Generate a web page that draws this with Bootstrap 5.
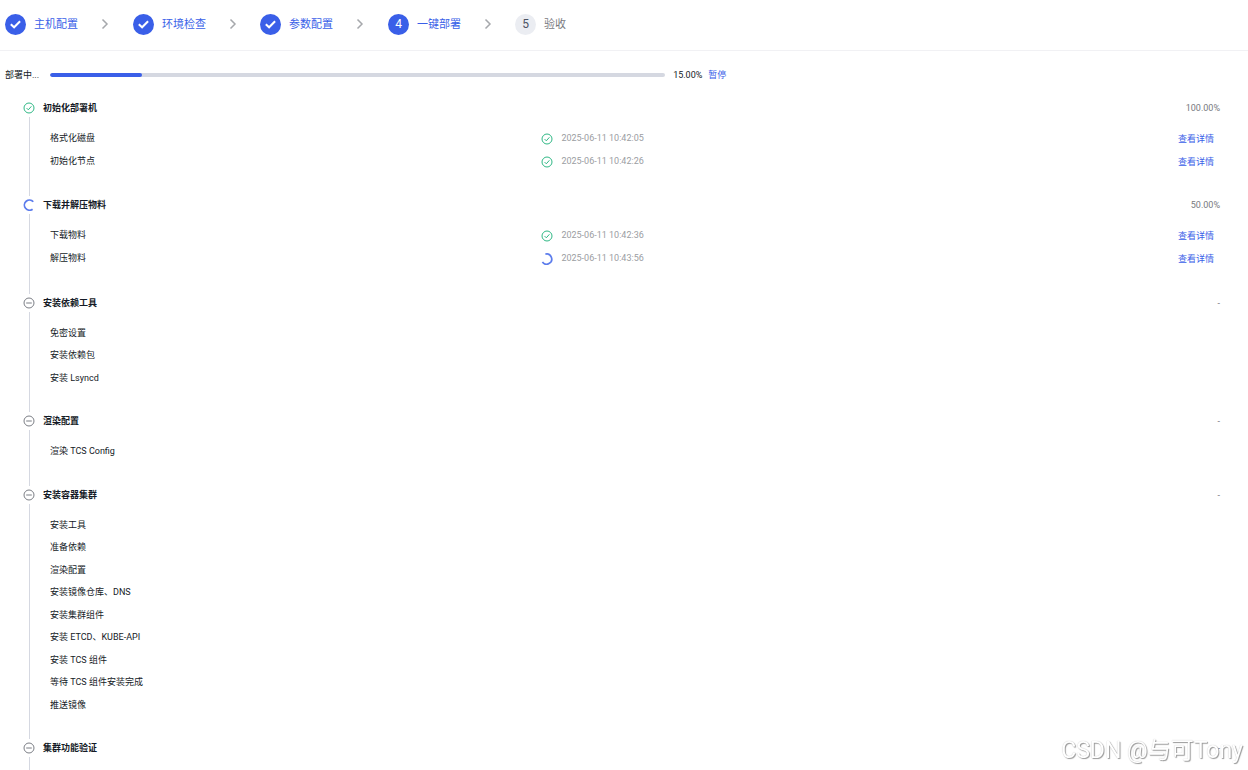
<!DOCTYPE html>
<html lang="zh-CN">
<head>
<meta charset="utf-8">
<meta name="viewport" content="width=device-width, initial-scale=1">
<title>一键部署</title>
<link href="https://cdn.jsdelivr.net/npm/bootstrap@5.3.0/dist/css/bootstrap.min.css" rel="stylesheet">
<style>
  :root { --brand: #3a5fe8; --ink: #141a26; --muted: #77797e; --faint: #9b9da2; --rail: #d5d8e1; }
  body { font: 9px/18px Roboto, "Noto Sans CJK SC", sans-serif; color: var(--ink); background: #fff; }
  a { color: var(--brand); text-decoration: none; }

  .steps { height: 51px; padding: 0 5px 2px; border-bottom: 1px solid #f1f1f4; font-size: 11px; }
  .step:not(:last-child) { margin-right: 24px; }
  .step:nth-child(even) { margin-right: 23px; }
  .step-dot { width: 21px; height: 21px; margin-right: 8px; background: var(--brand); color: #fff; font-size: 12px; line-height: 21px; }
  .step-dot.todo { background: #ebedf2; color: #4b5263; }
  .step-label { padding-top: 2px; }
  .step-label.todo { color: var(--muted); }
  .chevron { margin-left: 23px; }

  .overall { width: 57.8%; margin: 15px 5px 0; }
  .overall-label { width: 45px; }
  .overall .progress { height: 4px; margin-right: 8px; background: var(--rail); border-radius: 2px; }
  .overall .progress-bar { background: var(--brand); border-radius: 2px; }
  .btn-text { padding: 0; border: 0; background: none; color: var(--brand); margin-left: 6px; }

  .stages { margin: 15px 28px 0 23px; }
  .rail { width: 12px; margin-right: 8px; }
  .rail-icon { height: 18px; }
  .rail-line { width: 1px; background: var(--rail); }
  .stage-body { padding-bottom: 23px; }
  .stage:nth-child(even) .stage-body { padding-bottom: 24px; }
  .stage:last-child .stage-body { padding-bottom: 13px; }
  .stage-title { font-size: 9px; line-height: 18px; font-weight: 700; }
  .stage-pct { color: var(--muted); }
  .tasks { display: grid; grid-auto-rows: 22px 23px; margin: 10px 0 0 7px; line-height: 22px; }
  .tasks.detailed { grid-auto-rows: 23px; }
  .task { display: grid; grid-template-columns: 42% 1fr auto; }
  .task-time { color: var(--faint); }
  .task-time svg { margin: 6px 8px 0 0; }
  .task a { margin-right: 6px; padding-top: 1px; }
  .watermark { right: 5px; bottom: 3px; font-size: 23px; line-height: 32px; color: #fff; text-shadow: 1px 1px 1px #999, 0 0 1px #bbb; pointer-events: none; }
</style>
</head>
<body>
<svg class="d-none" aria-hidden="true">
  <symbol id="done" viewBox="0 0 12 12"><g fill="none" stroke="#2fb885"><circle cx="6" cy="6" r="5"/><path d="M3.6 6.1l1.7 1.7 3.1-3.5"/></g></symbol>
  <symbol id="wait" viewBox="0 0 12 12"><g fill="none" stroke="#7b7e85"><circle cx="6" cy="6" r="5"/><path d="M3.2 6h5.6"/></g></symbol>
  <symbol id="spin-a" viewBox="0 0 12 12"><path d="M10.3 2.7A5.1 5.1 0 1 0 9.6 10.2" fill="none" stroke="#5c7cec" stroke-width="1.7"/></symbol>
  <symbol id="spin-b" viewBox="0 0 12 12"><path d="M4.4 1.1A5.1 5.1 0 1 1 1.4 9" fill="none" stroke="#5c7cec" stroke-width="1.7"/></symbol>
  <symbol id="tick" viewBox="0 0 21 21"><path d="M5.8 10.2l3.3 3.1 6-6" fill="none" stroke="#fff" stroke-width="2"/></symbol>
  <symbol id="chev" viewBox="0 0 8 12"><path d="M1.5 1.5l4.5 4.5-4.5 4.5" fill="none" stroke="#a6a8ac" stroke-width="1.5"/></symbol>
</svg>

<header>
  <ol class="steps list-unstyled d-flex align-items-center mb-0">
    <li class="step d-flex align-items-center"><span class="step-dot rounded-circle d-flex"><svg width="21" height="21"><use href="#tick"/></svg></span><a href="#" class="step-label">主机配置</a><svg class="chevron" width="8" height="12"><use href="#chev"/></svg></li>
    <li class="step d-flex align-items-center"><span class="step-dot rounded-circle d-flex"><svg width="21" height="21"><use href="#tick"/></svg></span><a href="#" class="step-label">环境检查</a><svg class="chevron" width="8" height="12"><use href="#chev"/></svg></li>
    <li class="step d-flex align-items-center"><span class="step-dot rounded-circle d-flex"><svg width="21" height="21"><use href="#tick"/></svg></span><a href="#" class="step-label">参数配置</a><svg class="chevron" width="8" height="12"><use href="#chev"/></svg></li>
    <li class="step d-flex align-items-center"><span class="step-dot rounded-circle text-center">4</span><a href="#" class="step-label" aria-current="step">一键部署</a><svg class="chevron" width="8" height="12"><use href="#chev"/></svg></li>
    <li class="step d-flex align-items-center"><span class="step-dot todo rounded-circle text-center">5</span><span class="step-label todo">验收</span></li>
  </ol>
</header>

<main>
  <div class="overall d-flex align-items-center text-nowrap">
    <span class="overall-label flex-shrink-0" id="overall-label">部署中...</span>
    <div class="progress flex-grow-1" role="progressbar" aria-labelledby="overall-label" aria-valuenow="15" aria-valuemin="0" aria-valuemax="100"><div class="progress-bar" style="width: 15%"></div></div>
    <span>15.00%</span>
    <button type="button" class="btn-text">暂停</button>
  </div>

  <div class="stages">
    <section class="stage d-flex">
      <div class="rail d-flex flex-column align-items-center"><span class="rail-icon d-flex align-items-center"><svg width="12" height="12"><use href="#done"/></svg></span><span class="rail-line flex-grow-1"></span></div>
      <div class="stage-body flex-grow-1">
        <div class="d-flex justify-content-between"><h2 class="stage-title mb-0">初始化部署机</h2><span class="stage-pct">100.00%</span></div>
        <ul class="tasks detailed list-unstyled mb-0">
          <li class="task"><span>格式化磁盘</span><span class="task-time d-flex align-items-start"><svg width="12" height="12"><use href="#done"/></svg>2025-06-11 10:42:05</span><a href="#">查看详情</a></li>
          <li class="task"><span>初始化节点</span><span class="task-time d-flex align-items-start"><svg width="12" height="12"><use href="#done"/></svg>2025-06-11 10:42:26</span><a href="#">查看详情</a></li>
        </ul>
      </div>
    </section>

    <section class="stage d-flex">
      <div class="rail d-flex flex-column align-items-center"><span class="rail-icon d-flex align-items-center"><svg width="12" height="12"><use href="#spin-a"/></svg></span><span class="rail-line flex-grow-1"></span></div>
      <div class="stage-body flex-grow-1">
        <div class="d-flex justify-content-between"><h2 class="stage-title mb-0">下载并解压物料</h2><span class="stage-pct">50.00%</span></div>
        <ul class="tasks detailed list-unstyled mb-0">
          <li class="task"><span>下载物料</span><span class="task-time d-flex align-items-start"><svg width="12" height="12"><use href="#done"/></svg>2025-06-11 10:42:36</span><a href="#">查看详情</a></li>
          <li class="task"><span>解压物料</span><span class="task-time d-flex align-items-start"><svg width="12" height="12"><use href="#spin-b"/></svg>2025-06-11 10:43:56</span><a href="#">查看详情</a></li>
        </ul>
      </div>
    </section>

    <section class="stage d-flex">
      <div class="rail d-flex flex-column align-items-center"><span class="rail-icon d-flex align-items-center"><svg width="12" height="12"><use href="#wait"/></svg></span><span class="rail-line flex-grow-1"></span></div>
      <div class="stage-body flex-grow-1">
        <div class="d-flex justify-content-between"><h2 class="stage-title mb-0">安装依赖工具</h2><span class="stage-pct">-</span></div>
        <ul class="tasks list-unstyled mb-0">
          <li>免密设置</li>
          <li>安装依赖包</li>
          <li>安装 Lsyncd</li>
        </ul>
      </div>
    </section>

    <section class="stage d-flex">
      <div class="rail d-flex flex-column align-items-center"><span class="rail-icon d-flex align-items-center"><svg width="12" height="12"><use href="#wait"/></svg></span><span class="rail-line flex-grow-1"></span></div>
      <div class="stage-body flex-grow-1">
        <div class="d-flex justify-content-between"><h2 class="stage-title mb-0">渲染配置</h2><span class="stage-pct">-</span></div>
        <ul class="tasks list-unstyled mb-0">
          <li>渲染 TCS Config</li>
        </ul>
      </div>
    </section>

    <section class="stage d-flex">
      <div class="rail d-flex flex-column align-items-center"><span class="rail-icon d-flex align-items-center"><svg width="12" height="12"><use href="#wait"/></svg></span><span class="rail-line flex-grow-1"></span></div>
      <div class="stage-body flex-grow-1">
        <div class="d-flex justify-content-between"><h2 class="stage-title mb-0">安装容器集群</h2><span class="stage-pct">-</span></div>
        <ul class="tasks list-unstyled mb-0">
          <li>安装工具</li>
          <li>准备依赖</li>
          <li>渲染配置</li>
          <li>安装镜像仓库、DNS</li>
          <li>安装集群组件</li>
          <li>安装 ETCD、KUBE-API</li>
          <li>安装 TCS 组件</li>
          <li>等待 TCS 组件安装完成</li>
          <li>推送镜像</li>
        </ul>
      </div>
    </section>

    <section class="stage d-flex">
      <div class="rail d-flex flex-column align-items-center"><span class="rail-icon d-flex align-items-center"><svg width="12" height="12"><use href="#wait"/></svg></span><span class="rail-line flex-grow-1"></span></div>
      <div class="stage-body flex-grow-1">
        <div class="d-flex justify-content-between"><h2 class="stage-title mb-0">集群功能验证</h2><span class="stage-pct">-</span></div>
      </div>
    </section>
  </div>
</main>

<div class="watermark position-fixed text-nowrap">CSDN @与可Tony</div>
<script src="https://cdn.jsdelivr.net/npm/bootstrap@5.3.0/dist/js/bootstrap.bundle.min.js"></script>
</body>
</html>
